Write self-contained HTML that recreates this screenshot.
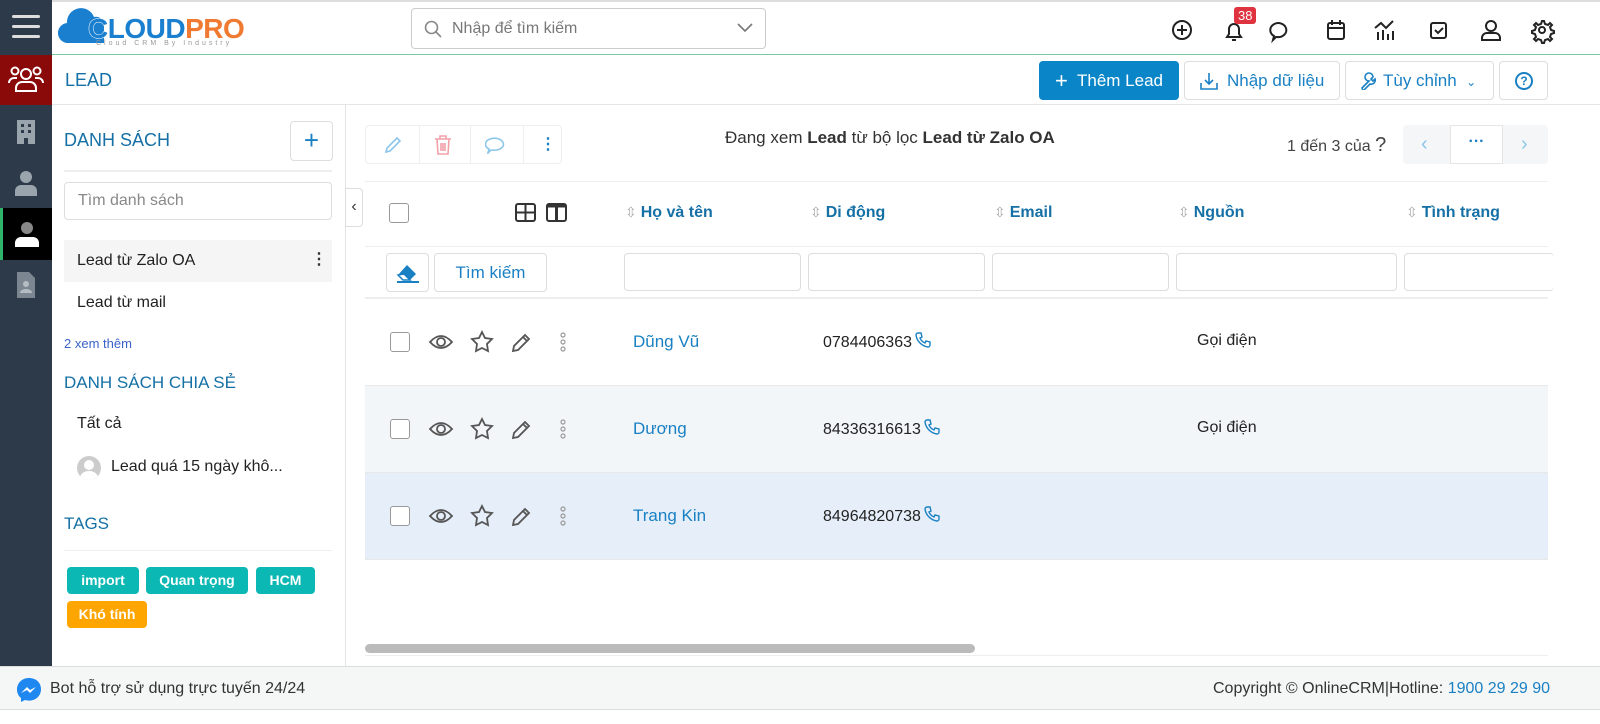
<!DOCTYPE html>
<html><head><meta charset="utf-8"><style>
*{box-sizing:border-box;margin:0;padding:0}
body{width:1600px;height:724px;overflow:hidden;font-family:"Liberation Sans",sans-serif;background:#fff;color:#333;position:relative;font-size:16px}
.abs{position:absolute}
.rail{left:0;top:0;width:52px;height:666px;background:#2c3a4a}
.top{left:52px;top:0;width:1548px;height:55px;border-bottom:1px solid #7cc6a0;border-top:2px solid #ddd}
.blue{color:#1570a6}
.btn{position:absolute;border:1px solid #ddd;border-radius:4px;background:#fff}
.cb{position:absolute;width:20px;height:20px;border:1.5px solid #999;border-radius:3px;background:#fff}
.th{position:absolute;top:204px;font-weight:bold;color:#1570a6;font-size:16px}
.th:before{content:"⇳";color:#aaa;font-weight:normal;margin-right:4px;font-size:14px}
.fi{position:absolute;top:253px;height:38px;border:1px solid #ddd;border-radius:4px}
.row{position:absolute;left:365px;width:1183px;height:87px;border-bottom:1px solid #e8e8e8}
.tag{position:absolute;height:27px;border-radius:4px;color:#fff;font-weight:bold;font-size:14px;line-height:27px;text-align:center}
.ph{display:inline-block;vertical-align:-2px;margin-left:3px}
</style></head><body>
<div class="abs rail"></div>
<div class="abs" style="left:0;top:0;width:52px;height:55px;background:#2c3a4a">
<div class="abs" style="left:12px;top:15px;width:28px;height:3px;background:#ddd;border-radius:2px"></div>
<div class="abs" style="left:12px;top:25px;width:28px;height:3px;background:#ddd;border-radius:2px"></div>
<div class="abs" style="left:12px;top:35px;width:28px;height:3px;background:#ddd;border-radius:2px"></div></div>
<div class="abs" style="left:0;top:55px;width:52px;height:50px;background:#8a0a0a">
<svg class="abs" style="left:8px;top:8px" width="36" height="32" viewBox="0 0 36 32" fill="none" stroke="#fff" stroke-width="2"><circle cx="18" cy="11" r="5"/><path d="M8 28v-3a6 6 0 0 1 6-6h8a6 6 0 0 1 6 6v3z"/><circle cx="7" cy="8" r="3.5"/><circle cx="29" cy="8" r="3.5"/><path d="M1 20a5 5 0 0 1 5-5h3M35 20a5 5 0 0 0-5-5h-3"/></svg></div>
<svg class="abs" style="left:17px;top:120px" width="18" height="24" viewBox="0 0 18 24"><rect width="18" height="24" fill="#9aa4ad"/><g fill="#2c3a4a"><rect x="4" y="4" width="3" height="3"/><rect x="11" y="4" width="3" height="3"/><rect x="4" y="10" width="3" height="3"/><rect x="11" y="10" width="3" height="3"/><rect x="7" y="18" width="4" height="6"/></g></svg>
<svg class="abs" style="left:15px;top:170px" width="22" height="26" viewBox="0 0 22 26" fill="#9aa4ad"><circle cx="11" cy="7" r="6"/><path d="M0 26v-5a6 6 0 0 1 6-6h10a6 6 0 0 1 6 6v5z"/></svg>
<div class="abs" style="left:0;top:208px;width:52px;height:52px;background:#000;border-left:3px solid #2fb36b">
<svg class="abs" style="left:12px;top:13px" width="24" height="26" viewBox="0 0 24 26"><circle cx="12" cy="7" r="6" fill="#888"/><path d="M0 26v-4a6 6 0 0 1 6-6h12a6 6 0 0 1 6 6v4z" fill="#fff"/></svg></div>
<svg class="abs" style="left:17px;top:272px" width="18" height="26" viewBox="0 0 18 26"><path d="M0 0h12l6 6v20H0z" fill="#7c8690"/><circle cx="9" cy="12" r="3" fill="#b5bcc2"/><path d="M3 21a6 4 0 0 1 12 0z" fill="#b5bcc2"/></svg>

<div class="abs top"></div>
<svg class="abs" style="left:58px;top:5px" width="60" height="40" viewBox="0 0 60 40"><path d="M11 38a10 10 0 0 1-2-20 14 14 0 0 1 27-6 9 9 0 0 1 10 5v21z" fill="#1a7fcf"/></svg>
<div class="abs" style="left:88px;top:13px;font-size:28px;font-weight:bold;letter-spacing:-0.5px;z-index:2"><span style="color:#1a7fcf;-webkit-text-stroke:1px #fff;paint-order:stroke fill">C</span><span style="color:#1a7fcf">LOUD</span><span style="color:#f07a32">PRO</span></div>
<div class="abs" style="left:96px;top:40px;font-size:7px;color:#999;letter-spacing:3px">Cloud CRM By Industry</div>
<div class="abs" style="left:411px;top:8px;width:355px;height:41px;border:1px solid #ccc;border-radius:4px">
<svg class="abs" style="left:12px;top:11px" width="18" height="18" viewBox="0 0 18 18" fill="none" stroke="#888" stroke-width="1.6"><circle cx="7.5" cy="7.5" r="6"/><path d="M12 12l5 5"/></svg>
<div class="abs" style="left:40px;top:11px;color:#777">Nhập để tìm kiếm</div>
<svg class="abs" style="left:325px;top:14px" width="16" height="10" viewBox="0 0 16 10" fill="none" stroke="#777" stroke-width="1.6"><path d="M1 1l7 7 7-7"/></svg></div>
<svg class="abs" style="left:1170px;top:18px" width="400" height="26" viewBox="0 0 400 26" fill="none" stroke="#222" stroke-width="2">
<circle cx="12" cy="12" r="9"/><path d="M12 7v10M7 12h10"/>
<path d="M57 19h14l-2-3v-5a5 5 0 0 0-10 0v5zM62 22h4"/>
<path d="M106 19l-3 3 1-4a8 7 0 1 1 3 1z"/>
<rect x="158" y="5" width="16" height="16" rx="2"/><path d="M158 10h16M162 2v5M170 2v5"/>
<path d="M208 22v-8M213 22v-10M218 22v-6M223 22v-9M205 10l6-5 5 5 7-7"/>
<rect x="261" y="5" width="15" height="15" rx="2"/><path d="M265 12l3 3 5-5"/>
<circle cx="321" cy="8" r="5"/><path d="M312 22v-2a5 5 0 0 1 5-5h8a5 5 0 0 1 5 5v2z"/>
<circle cx="372" cy="12" r="3"/><path d="M372 3l2 0 1 3 3 1 2-2 2 2-2 2 1 3 3 1v2l-3 1-1 3 2 2-2 2-2-2-3 1-1 3h-2l-1-3-3-1-2 2-2-2 2-2-1-3-3-1v-2l3-1 1-3-2-2 2-2 2 2 3-1z"/></svg>
<div class="abs" style="left:1234px;top:7px;background:#e03340;color:#fff;font-size:13px;border-radius:3px;padding:0 4px;line-height:17px">38</div>

<div class="abs" style="left:52px;top:55px;width:1548px;height:50px;border-bottom:1px solid #e5e5e5"></div>
<div class="abs blue" style="left:65px;top:70px;font-size:18px">LEAD</div>
<div class="abs" style="left:1039px;top:61px;width:140px;height:39px;background:#0a86c8;border-radius:4px;color:#fff;font-size:17px;line-height:39px;text-align:center"><span style="font-size:22px;vertical-align:-2px">+</span>&nbsp; Thêm Lead</div>
<div class="btn" style="left:1184px;top:61px;width:156px;height:39px;color:#1a80c4;font-size:17px;line-height:37px;padding-left:42px">Nhập dữ liệu
<svg class="abs" style="left:14px;top:9px" width="20" height="20" viewBox="0 0 20 20" fill="none" stroke="#1a80c4" stroke-width="1.6"><path d="M10 2v11M6 9l4 4 4-4M2 12v6h16v-6"/></svg></div>
<div class="btn" style="left:1345px;top:61px;width:149px;height:39px;color:#1a80c4;font-size:17px;line-height:37px;padding-left:37px">Tùy chỉnh &nbsp;<span style="font-size:12px">⌄</span>
<svg class="abs" style="left:14px;top:10px" width="18" height="18" viewBox="0 0 18 18" fill="none" stroke="#1a80c4" stroke-width="1.6"><path d="M2 16l7-7a4 4 0 1 1 4-4l-2 2 2 2 2-2a4 4 0 0 1-5 5l-7 7z"/></svg></div>
<div class="btn" style="left:1499px;top:61px;width:49px;height:39px"><div class="abs" style="left:15px;top:10px;width:18px;height:18px;border:2px solid #1a80c4;border-radius:50%;color:#1a80c4;font-size:12px;font-weight:bold;text-align:center;line-height:14px">?</div></div>

<div class="abs" style="left:345px;top:105px;width:1px;height:561px;background:#e5e5e5"></div>
<div class="abs blue" style="left:64px;top:130px;font-size:18px">DANH SÁCH</div>
<div class="btn" style="left:290px;top:121px;width:43px;height:40px;color:#1a80c4;font-size:26px;text-align:center;line-height:36px">+</div>
<div class="abs" style="left:64px;top:170px;width:268px;height:2px;background:#eee"></div>
<div class="btn" style="left:64px;top:182px;width:268px;height:38px;color:#888;padding:9px 13px">Tìm danh sách</div>
<div class="abs" style="left:64px;top:240px;width:268px;height:42px;background:#f5f5f5"></div>
<div class="abs" style="left:77px;top:252px;color:#222">Lead từ Zalo OA</div>
<div class="abs" style="left:311px;top:249px;font-weight:bold;color:#333">⋮</div>
<div class="abs" style="left:77px;top:294px;color:#222">Lead từ mail</div>
<div class="abs" style="left:64px;top:336px;font-size:13px;color:#3a62c8">2 xem thêm</div>
<div class="abs blue" style="left:64px;top:373px;font-size:17px">DANH SÁCH CHIA SẺ</div>
<div class="abs" style="left:77px;top:415px;color:#222">Tất cả</div>
<div class="abs" style="left:77px;top:456px;width:24px;height:24px;border-radius:50%;background:#ccc;overflow:hidden"><div class="abs" style="left:7px;top:4px;width:10px;height:10px;border-radius:50%;background:#fff"></div><div class="abs" style="left:3px;top:15px;width:18px;height:14px;border-radius:50%;background:#fff"></div></div>
<div class="abs" style="left:111px;top:458px;color:#222">Lead quá 15 ngày khô...</div>
<div class="abs blue" style="left:64px;top:514px;font-size:17px">TAGS</div>
<div class="abs" style="left:64px;top:550px;width:268px;height:1px;background:#eee"></div>
<div class="tag" style="left:67px;top:567px;width:72px;background:#0bb8b3">import</div>
<div class="tag" style="left:146px;top:567px;width:102px;background:#0bb8b3">Quan trọng</div>
<div class="tag" style="left:256px;top:567px;width:59px;background:#0bb8b3">HCM</div>
<div class="tag" style="left:67px;top:601px;width:80px;background:#ffa500">Khó tính</div>

<div class="btn" style="left:345px;top:188px;width:18px;height:39px;border-radius:0 4px 4px 0;font-size:16px;text-align:center;line-height:36px">‹</div>

<div class="btn" style="left:365px;top:125px;width:197px;height:39px;border-color:#eee">
<div class="abs" style="left:53px;top:0;width:1px;height:37px;background:#eee"></div>
<div class="abs" style="left:104px;top:0;width:1px;height:37px;background:#eee"></div>
<div class="abs" style="left:157px;top:0;width:1px;height:37px;background:#eee"></div>
<svg class="abs" style="left:17px;top:9px" width="20" height="20" viewBox="0 0 20 20" fill="none" stroke="#8cc6ea" stroke-width="1.6"><path d="M3 17l1-4 10-10 3 3-10 10z"/></svg>
<svg class="abs" style="left:68px;top:9px" width="18" height="20" viewBox="0 0 18 20" fill="none" stroke="#f2a0a8" stroke-width="1.6"><path d="M1 4h16M6 4V1h6v3M3 4l1 15h10l1-15M7 8v8M9 8v8M11 8v8"/></svg>
<svg class="abs" style="left:119px;top:10px" width="22" height="18" viewBox="0 0 22 18" fill="none" stroke="#8cc6ea" stroke-width="1.6"><path d="M6 14l-3 3 1-4a9 6 0 1 1 3 1z"/></svg>
<div class="abs" style="left:174px;top:8px;font-weight:bold;color:#1a80c4">⋮</div></div>
<div class="abs" style="left:725px;top:128px;font-size:17px;color:#333">Đang xem <b>Lead</b> từ bộ lọc <b>Lead từ Zalo OA</b></div>
<div class="abs" style="left:1287px;top:134px;font-size:16px;color:#444">1 đến 3 của <span style="font-size:20px">?</span></div>
<div class="abs" style="left:1403px;top:125px;width:145px;height:39px;background:#f5f6f7;border-radius:4px">
<div class="abs" style="left:47px;top:0;width:53px;height:39px;background:#fff;border:1px solid #e5e5e5;text-align:center;color:#1a80c4;font-weight:bold;line-height:32px">···</div>
<div class="abs" style="left:18px;top:8px;color:#8cc6ea;font-size:20px">‹</div>
<div class="abs" style="left:118px;top:8px;color:#8cc6ea;font-size:20px">›</div></div>

<div class="abs" style="left:365px;top:181px;width:1183px;height:1px;background:#eee"></div>
<div class="abs" style="left:365px;top:246px;width:1183px;height:1px;background:#eee"></div>
<div class="abs" style="left:365px;top:297px;width:1183px;height:2px;background:#eee"></div>
<div class="cb" style="left:389px;top:203px"></div>
<svg class="abs" style="left:515px;top:203px" width="54" height="20" viewBox="0 0 54 20" fill="none" stroke="#333" stroke-width="2"><rect x="1" y="1" width="19" height="17" rx="2"/><path d="M10.5 1v17M1 9.5h19"/><rect x="32" y="1" width="19" height="17" rx="2"/><path d="M41.5 1v17M32 3h19" stroke-width="3"/></svg>
<div class="th" style="left:625px">Họ và tên</div>
<div class="th" style="left:810px">Di động</div>
<div class="th" style="left:994px">Email</div>
<div class="th" style="left:1178px">Nguồn</div>
<div class="th" style="left:1406px">Tình trạng</div>
<div class="btn" style="left:386px;top:253px;width:43px;height:39px">
<svg class="abs" style="left:9px;top:9px" width="24" height="20" viewBox="0 0 24 20"><path d="M2 12l9-10 9 9-6 6H7z" fill="#1a80c4"/><path d="M2 12l5 5h7l-6-6z" fill="#fff" stroke="#1a80c4" stroke-width="1.5"/><path d="M1 19h22" stroke="#1a80c4" stroke-width="2"/></svg></div>
<div class="btn" style="left:434px;top:253px;width:113px;height:39px;color:#1a80c4;font-size:17px;text-align:center;line-height:37px">Tìm kiếm</div>
<div class="fi" style="left:624px;width:177px"></div>
<div class="fi" style="left:808px;width:177px"></div>
<div class="fi" style="left:992px;width:177px"></div>
<div class="fi" style="left:1176px;width:221px"></div>
<div class="fi" style="left:1404px;width:150px;border-right:none"></div>

<div class="row" style="top:299px"></div>
<div class="row" style="top:386px;background:#f3f6f9"></div>
<div class="row" style="top:473px;background:#e6eff9"></div>
<div class="cb" style="left:390px;top:332px"></div><div class="cb" style="left:390px;top:419px"></div><div class="cb" style="left:390px;top:506px"></div>
<svg class="abs" style="left:428px;top:328px" width="150" height="200" viewBox="0 0 150 200" fill="none" stroke="#555" stroke-width="1.8">
<g id="ic"><path d="M2 14q11-12 22 0q-11 12-22 0z"/><circle cx="13" cy="14" r="4"/><path d="M54 4l3 6 7 1-5 5 1 7-6-3-6 3 1-7-5-5 7-1z"/><path d="M85 23l1-5 11-11 4 4-11 11zM95 9l4 4" /><circle cx="135" cy="7" r="2" stroke-width="1.2" stroke="#999"/><circle cx="135" cy="14" r="2" stroke-width="1.2" stroke="#999"/><circle cx="135" cy="21" r="2" stroke-width="1.2" stroke="#999"/></g>
<use href="#ic" y="87"/><use href="#ic" y="174"/></svg>
<div class="abs" style="left:633px;top:332px;color:#1a80c4;font-size:17px">Dũng Vũ</div>
<div class="abs" style="left:633px;top:419px;color:#1a80c4;font-size:17px">Dương</div>
<div class="abs" style="left:633px;top:506px;color:#1a80c4;font-size:17px">Trang Kin</div>
<div class="abs" style="left:823px;top:332px;color:#222">0784406363<svg class="ph" width="17" height="17" viewBox="0 0 17 17" fill="none" stroke="#1a80c4" stroke-width="1.4"><path d="M3 1l3 0 1 4-2 1a9 9 0 0 0 5 5l1-2 4 1v3a2 2 0 0 1-2 2A14 14 0 0 1 1 3a2 2 0 0 1 2-2z"/></svg></div>
<div class="abs" style="left:823px;top:419px;color:#222">84336316613<svg class="ph" width="17" height="17" viewBox="0 0 17 17" fill="none" stroke="#1a80c4" stroke-width="1.4"><path d="M3 1l3 0 1 4-2 1a9 9 0 0 0 5 5l1-2 4 1v3a2 2 0 0 1-2 2A14 14 0 0 1 1 3a2 2 0 0 1 2-2z"/></svg></div>
<div class="abs" style="left:823px;top:506px;color:#222">84964820738<svg class="ph" width="17" height="17" viewBox="0 0 17 17" fill="none" stroke="#1a80c4" stroke-width="1.4"><path d="M3 1l3 0 1 4-2 1a9 9 0 0 0 5 5l1-2 4 1v3a2 2 0 0 1-2 2A14 14 0 0 1 1 3a2 2 0 0 1 2-2z"/></svg></div>
<div class="abs" style="left:1197px;top:332px;color:#222">Gọi điện</div>
<div class="abs" style="left:1197px;top:419px;color:#222">Gọi điện</div>

<div class="abs" style="left:365px;top:644px;width:610px;height:9px;background:#bbb;border-radius:5px"></div>
<div class="abs" style="left:365px;top:655px;width:1183px;height:1px;background:#eee"></div>

<div class="abs" style="left:0;top:666px;width:1600px;height:44px;background:#f5f6f6;border-top:1px solid #ddd;border-bottom:1px solid #ddd"></div>
<svg class="abs" style="left:16px;top:677px" width="26" height="26" viewBox="0 0 26 26"><path d="M13 1C6 1 1 6 1 12.5c0 3.5 1.5 6.5 4 8.5v4l4-2c1.2.4 2.6.6 4 .6 7 0 12-5 12-11.5S20 1 13 1z" fill="#1e88f0"/><path d="M5 16l6-6 3 3 6-3-6 6-3-3z" fill="#fff"/></svg>
<div class="abs" style="left:50px;top:680px;color:#333">Bot hỗ trợ sử dụng trực tuyến 24/24</div>
<div class="abs" style="left:1213px;top:680px;color:#333">Copyright © OnlineCRM|Hotline: <span style="color:#1a80c4">1900 29 29 90</span></div>
</body></html>
